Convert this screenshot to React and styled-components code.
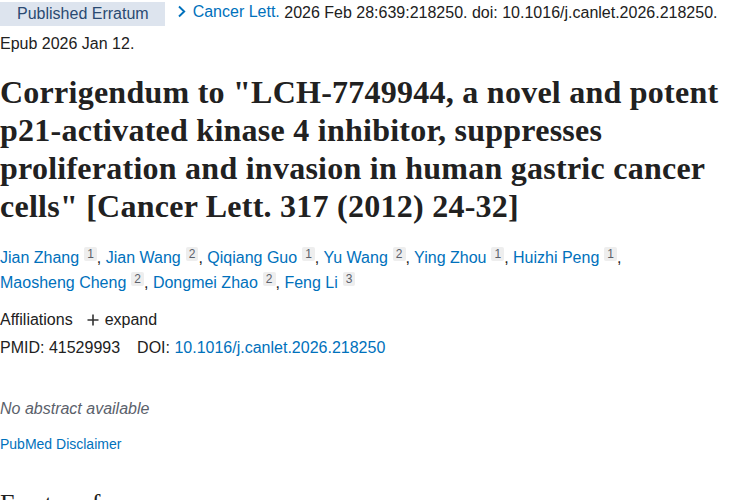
import React from "react";
import styled, { createGlobalStyle } from "styled-components";

const Global = createGlobalStyle`
  html, body { margin: 0; padding: 0; background: #fff; }
  body { font-family: "Liberation Sans", Arial, sans-serif; color: #212121; }
`;

const Page = styled.main`
  width: 750px;
  height: 500px;
  overflow: hidden;
`;

const Citation = styled.div`
  margin-top: -4px;
  font-size: 16px;
  line-height: 31px;
  color: #212121;
`;

const Badge = styled.span`
  display: inline-block;
  vertical-align: middle;
  height: 24px;
  line-height: 24px;
  padding: 0 16px 0 17px;
  background: #dde4ee;
  color: #2a4a72;
  margin-right: 12px;
`;

const Journal = styled.a`
  color: #0071bc;
  text-decoration: none;
  display: inline-flex;
  align-items: center;
  gap: 7px;
`;

const Chevron = styled.svg`
  width: 9px;
  height: 13px;
  flex: none;
`;

const Title = styled.h1`
  margin: 14px 0 0;
  font-family: "Liberation Serif", "Times New Roman", serif;
  font-weight: 700;
  font-size: 32px;
  line-height: 38px;
  color: #212121;
  letter-spacing: 0.25px;
`;

const Authors = styled.div`
  margin-top: 20px;
  font-size: 16px;
  line-height: 25px;
`;

const AuthorLink = styled.a`
  color: #0071bc;
  text-decoration: none;
`;

const Aff = styled.sup`
  display: inline-block;
  margin-left: 5px;
  padding: 0 3px;
  background: #eeeeee;
  color: #5b616b;
  font-size: 12px;
  line-height: 14px;
  border-radius: 2px;
  vertical-align: 5px;
`;

const AffRow = styled.div`
  margin-top: 12px;
  font-size: 16px;
  line-height: 25px;
  display: flex;
  align-items: center;
  gap: 14px;
`;

const Expand = styled.span`
  display: inline-flex;
  align-items: center;
  gap: 6px;
  color: #212121;
`;

const IdRow = styled.div`
  margin-top: 3px;
  font-size: 16px;
  line-height: 25px;
  display: flex;
  gap: 17px;
`;

const Link = styled.a`
  color: #0071bc;
  text-decoration: none;
`;

const NoAbstract = styled.p`
  margin: 36px 0 0;
  font-size: 16px;
  line-height: 25px;
  font-style: italic;
  color: #5b616b;
`;

const Disclaimer = styled.a`
  display: block;
  margin-top: 13px;
  font-size: 14px;
  line-height: 20px;
  color: #0071bc;
  text-decoration: none;
`;

const Section = styled.h2`
  margin: 34px 0 0;
  font-family: "Liberation Serif", "Times New Roman", serif;
  font-weight: 400;
  font-size: 26px;
  line-height: 31px;
  color: #212121;
`;

const authors = [
  ["Jian Zhang", 1],
  ["Jian Wang", 2],
  ["Qiqiang Guo", 1],
  ["Yu Wang", 2],
  ["Ying Zhou", 1],
  ["Huizhi Peng", 1],
  ["Maosheng Cheng", 2],
  ["Dongmei Zhao", 2],
  ["Feng Li", 3],
];

export default function App() {
  return (
    <Page>
      <Global />
      <Citation>
        <Badge>Published Erratum</Badge>
        <Journal href="#">
          <Chevron viewBox="0 0 9 13">
            <polyline points="2,1.5 7.2,6.5 2,11.5" fill="none" stroke="#0071bc" strokeWidth="1.9" />
          </Chevron>
          Cancer Lett.
        </Journal>{" "}
        2026 Feb 28:639:218250. doi: 10.1016/j.canlet.2026.218250.
        <br />
        Epub 2026 Jan 12.
      </Citation>
      <Title>
        Corrigendum to "LCH-7749944, a novel and potent
        <br />
        p21-activated kinase 4 inhibitor, suppresses
        <br />
        proliferation and invasion in human gastric cancer
        <br />
        cells" [Cancer Lett. 317 (2012) 24-32]
      </Title>
      <Authors>
        {authors.map(([name, n], i) => (
          <React.Fragment key={name}>
            <AuthorLink href="#">{name}</AuthorLink>
            <Aff>{n}</Aff>
            {i < authors.length - 1 ? ", " : ""}
            {i === 5 ? <br /> : null}
          </React.Fragment>
        ))}
      </Authors>
      <AffRow>
        <span>Affiliations</span>
        <Expand>
          <svg width="12" height="12" viewBox="0 0 12 12">
            <path d="M6 0.5v11M0.5 6h11" stroke="#333" strokeWidth="1.6" fill="none" />
          </svg>
          expand
        </Expand>
      </AffRow>
      <IdRow>
        <span>PMID: 41529993</span>
        <span>
          DOI: <Link href="#">10.1016/j.canlet.2026.218250</Link>
        </span>
      </IdRow>
      <NoAbstract>No abstract available</NoAbstract>
      <Disclaimer href="#">PubMed Disclaimer</Disclaimer>
      <Section>Erratum for</Section>
    </Page>
  );
}
